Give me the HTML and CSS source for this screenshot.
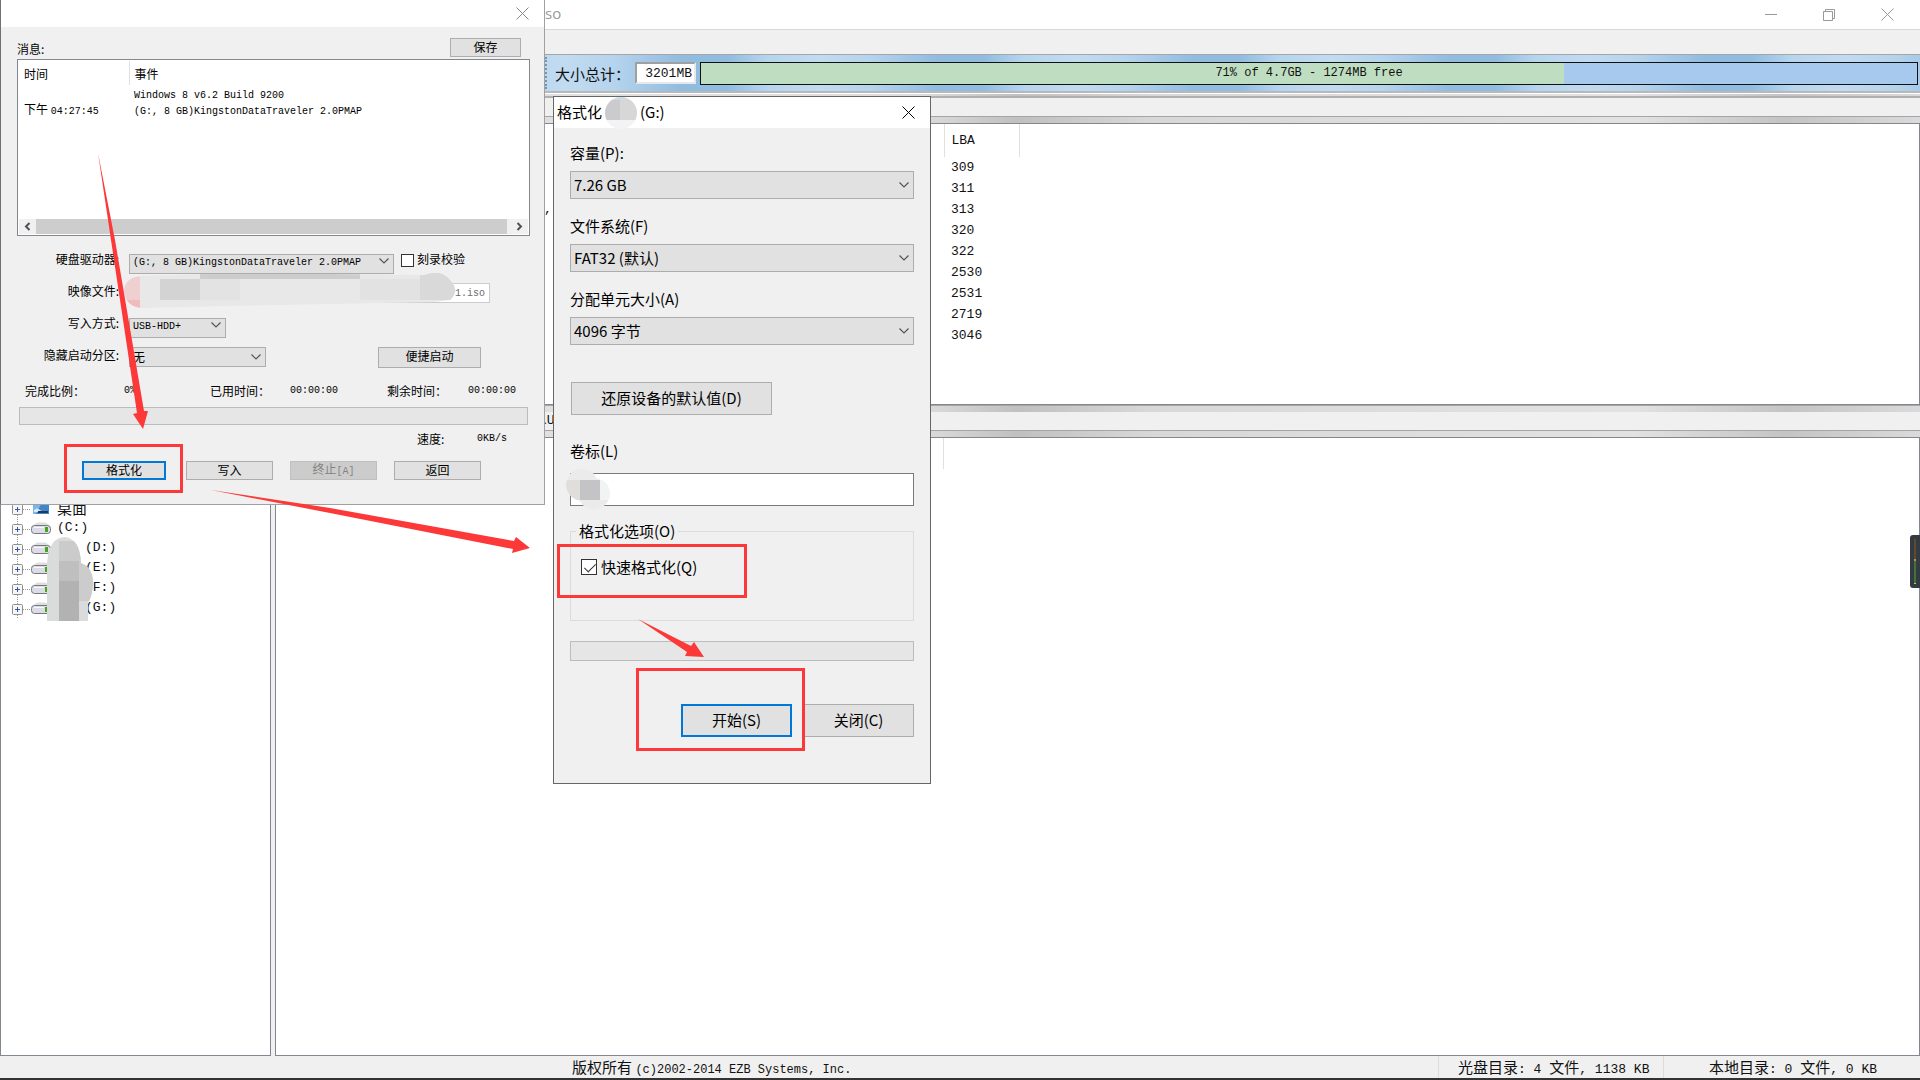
FILE: index.html
```html
<!DOCTYPE html>
<html lang="zh-CN">
<head>
    <meta charset="UTF-8">
    <meta name="viewport" content="width=device-width, initial-scale=1.0">
    <title>UltraISO</title>
    <link rel="stylesheet" href="styles.css">
</head>
<body>
    <svg class="defs" width="0" height="0">
        <symbol id="chevron" viewBox="0 0 10 6"><path d="M0.5 0.5 L5 5 L9.5 0.5" fill="none" stroke="#555" stroke-width="1.2"/></symbol>
        <symbol id="close" viewBox="0 0 13 13"><path d="M0.5 0.5 L12.5 12.5 M12.5 0.5 L0.5 12.5" fill="none" stroke="currentColor"/></symbol>
        <symbol id="plus" viewBox="0 0 19 20">
            <path d="M5.5 0 V20 M11 10.5 H19" stroke="#999" stroke-dasharray="1 1"/>
            <rect x="0.5" y="5.5" width="10" height="10" rx="1" fill="#f6f6f6" stroke="#8f8f8f"/>
            <path d="M3 10.5 H8 M5.5 8 V13" stroke="#3a55a5"/>
        </symbol>
        <symbol id="drive" viewBox="0 0 20 13">
            <path d="M2 4 Q4 0.5 8 0.5 H13 Q17 0.5 18 4 Z" fill="#dedede"/>
            <rect x="0.5" y="3.5" width="19" height="8" rx="3" fill="#dcdce6" stroke="#77777c"/>
            <path d="M3 5.5 H13" stroke="#f8f8ff"/>
            <rect x="14" y="5" width="3" height="5" fill="#46a51d"/>
        </symbol>
        <symbol id="desktop" viewBox="0 0 20 13">
            <rect x="2" width="16" height="12" fill="#3f86cf"/>
            <path d="M2 0 H11 L5 12 H2 Z" fill="#7fb5e6"/>
            <path d="M3 8 Q6 5 9 8 L12 10 H3 Z" fill="#d8ebfa"/>
            <rect x="7" y="9" width="10" height="2" fill="#24384f"/>
        </symbol>
    </svg>

    <!-- main window -->
    <div class="app">
        <header class="titlebar">
            <span class="app-title">so</span>
            <div class="window-buttons">
                <button aria-label="最小化"><svg width="12" height="12"><path d="M0 5.5 H12" stroke="#999"/></svg></button>
                <button aria-label="还原"><svg width="12" height="12"><path d="M0.5 2.5 H9.5 V11.5 H0.5 Z M2.5 2.5 V0.5 H11.5 V9.5 H9.5" fill="none" stroke="#999"/></svg></button>
                <button aria-label="关闭"><svg width="13" height="13"><use href="#close"/></svg></button>
            </div>
        </header>
        <div class="menubar"></div>
        <div class="toolbar">
            <span class="grip"></span>
            <label for="total">大小总计：</label>
            <input id="total" class="total" type="text" value="3201MB" readonly>
            <div class="capacity">
                <div class="capacity-used" style="width: 71%"></div>
                <span>71% of 4.7GB - 1274MB free</span>
            </div>
        </div>

        <div class="splitter thin"></div>
        <div class="pathbar"></div>
        <div class="splitter"></div>
        <div class="split upper">
            <div class="pane"></div>
            <div class="pane">
                <table class="files">
                    <thead>
                        <tr><th class="col-name"></th><th class="col-rest"></th><th class="col-lba">LBA</th></tr>
                    </thead>
                    <tbody>
                        <tr><td></td><td></td><td>309</td></tr>
                        <tr><td></td><td></td><td>311</td></tr>
                        <tr><td></td><td>,</td><td>313</td></tr>
                        <tr><td></td><td></td><td>320</td></tr>
                        <tr><td></td><td></td><td>322</td></tr>
                        <tr><td></td><td></td><td>2530</td></tr>
                        <tr><td></td><td></td><td>2531</td></tr>
                        <tr><td></td><td></td><td>2719</td></tr>
                        <tr><td></td><td></td><td>3046</td></tr>
                    </tbody>
                </table>
            </div>
        </div>
        <div class="splitter"></div>
        <div class="pathbar"><span>\U</span></div>
        <div class="splitter"></div>
        <div class="split lower">
            <div class="pane">
                <ul class="tree">
                    <li><svg class="plus"><use href="#plus"/></svg><svg class="icon"><use href="#desktop"/></svg>桌面</li>
                    <li><svg class="plus"><use href="#plus"/></svg><svg class="icon"><use href="#drive"/></svg><span class="latin">(C:)</span></li>
                    <li><svg class="plus"><use href="#plus"/></svg><svg class="icon"><use href="#drive"/></svg><span class="latin volume">(D:)</span></li>
                    <li><svg class="plus"><use href="#plus"/></svg><svg class="icon"><use href="#drive"/></svg><span class="latin volume">(E:)</span></li>
                    <li><svg class="plus"><use href="#plus"/></svg><svg class="icon"><use href="#drive"/></svg><span class="latin volume">(F:)</span></li>
                    <li><svg class="plus"><use href="#plus"/></svg><svg class="icon"><use href="#drive"/></svg><span class="latin volume">(G:)</span></li>
                </ul>
                <svg class="smudge smudge-tree" width="46" height="84">
                    <clipPath id="clip-tree"><path d="M0 84 V26 Q2 0 18 0 Q33 2 34 26 Q45 30 46 44 Q46 58 41 66 V84 Z"/></clipPath>
                    <g clip-path="url(#clip-tree)">
                        <rect width="46" height="84" fill="#dadcdb"/>
                        <rect x="12" y="4" width="34" height="20" fill="#cbcbcb"/>
                        <rect x="12" y="24" width="20" height="20" fill="#bfbfbf"/>
                        <rect x="32" y="24" width="14" height="40" fill="#cccccc"/>
                        <rect x="12" y="44" width="20" height="40" fill="#b2b2b2"/>
                    </g>
                </svg>
            </div>
            <div class="pane"><div class="empty-header"></div></div>
        </div>

        <footer class="statusbar">
            <div class="copyright">版权所有 <span class="latin-s">(c)2002-2014 EZB Systems, Inc.</span></div>
            <div class="status-cell">光盘目录<span class="latin">: 4 </span>文件<span class="latin">, 1138 KB</span></div>
            <div class="status-cell last">本地目录<span class="latin">: 0 </span>文件<span class="latin">, 0 KB</span></div>
        </footer>
    </div>

    <!-- write disk image dialog -->
    <section class="dialog write-dialog">
        <div class="dialog-title">
            <button class="close" aria-label="关闭"><svg width="13" height="13"><use href="#close"/></svg></button>
        </div>
        <div class="write-body">
            <div class="message-head">
                <span>消息:</span>
                <button class="btn save">保存</button>
            </div>
            <div class="log">
                <table>
                    <thead><tr><th class="col-time">时间</th><th>事件</th></tr></thead>
                    <tbody>
                        <tr><td></td><td><span class="mono">Windows 8 v6.2 Build 9200</span></td></tr>
                        <tr><td>下午 <span class="mono">04:27:45</span></td><td><span class="mono">(G:, 8 GB)KingstonDataTraveler 2.0PMAP</span></td></tr>
                    </tbody>
                </table>
                <div class="scrollbar">
                    <svg width="17" height="15"><path d="M10.5 4 L7 7.5 L10.5 11" fill="none" stroke="#505050" stroke-width="2"/></svg>
                    <div class="thumb"></div>
                    <svg width="21" height="15"><path d="M10.5 4 L14 7.5 L10.5 11" fill="none" stroke="#505050" stroke-width="2"/></svg>
                </div>
            </div>

            <div class="fields">
                <div class="field">
                    <label for="drive-select">硬盘驱动器:</label>
                    <div class="select w-drive">
                        <select id="drive-select" class="mono"><option>(G:, 8 GB)KingstonDataTraveler 2.0PMAP</option></select>
                        <svg><use href="#chevron"/></svg>
                    </div>
                    <input id="verify" class="check" type="checkbox"><label for="verify" class="check-label">刻录校验</label>
                </div>
                <div class="field image-field">
                    <label for="image-file">映像文件:</label>
                    <input id="image-file" class="image-file mono" type="text" value="1.iso" readonly>
                    <svg class="smudge smudge-image" width="332" height="36">
                        <clipPath id="clip-image"><path d="M18 35 Q2 34 0 18 Q1 4 18 3 L80 1 H200 L300 2 Q318 -4 326 7 Q336 18 326 27 L310 29 L100 33 Z"/></clipPath>
                        <g clip-path="url(#clip-image)">
                            <rect width="332" height="38" fill="#e8e8e8"/>
                            <rect width="16" height="27" fill="#efcfcf"/>
                            <rect y="27" width="16" height="11" fill="#f1babb"/>
                            <rect x="36" y="6" width="40" height="21" fill="#d3d3d3"/>
                            <rect x="76" y="0" width="160" height="6" fill="#cdcdcd"/>
                            <rect x="76" y="6" width="40" height="21" fill="#e3e3e3"/>
                            <rect x="236" y="6" width="60" height="21" fill="#e2e2e2"/>
                            <rect x="296" y="0" width="36" height="27" fill="#d9d9d9"/>
                        </g>
                    </svg>
                </div>
                <div class="field">
                    <label for="method">写入方式:</label>
                    <div class="select w-method">
                        <select id="method" class="mono"><option>USB-HDD+</option></select>
                        <svg><use href="#chevron"/></svg>
                    </div>
                </div>
                <div class="field">
                    <label for="hidden-part">隐藏启动分区:</label>
                    <div class="select w-hidden">
                        <select id="hidden-part"><option>无</option></select>
                        <svg><use href="#chevron"/></svg>
                    </div>
                    <button class="btn quick">便捷启动</button>
                </div>
            </div>

            <div class="stats">
                <span>完成比例：</span><span class="mono">0%</span>
                <span>已用时间：</span><span class="mono">00:00:00</span>
                <span>剩余时间：</span><span class="mono">00:00:00</span>
            </div>
            <div class="progress"></div>
            <div class="speed"><span>速度:</span><span class="mono">0KB/s</span></div>
            <div class="actions">
                <button class="btn primary">格式化</button>
                <button class="btn">写入</button>
                <button class="btn" disabled>终止<span class="mono">[A]</span></button>
                <button class="btn">返回</button>
            </div>
        </div>
    </section>

    <!-- format dialog -->
    <section class="dialog format-dialog">
        <div class="dialog-title">
            <span>格式化</span>
            <svg width="32" height="32">
                <clipPath id="clip-title"><circle cx="16" cy="16" r="16"/></clipPath>
                <g clip-path="url(#clip-title)">
                    <rect width="32" height="32" fill="#f3f3f4"/>
                    <rect width="32" height="4" fill="#cfdce6"/>
                    <rect y="3" width="15" height="20" fill="#cbcbcd"/>
                    <rect x="15" y="3" width="17" height="20" fill="#d7d7d8"/>
                </g>
            </svg>
            <span>(G:)</span>
            <button class="close" aria-label="关闭"><svg width="13" height="13"><use href="#close"/></svg></button>
        </div>
        <div class="format-body">
            <label for="capacity">容量(P):</label>
            <div class="select">
                <select id="capacity"><option>7.26 GB</option></select>
                <svg><use href="#chevron"/></svg>
            </div>
            <label for="filesystem">文件系统(F)</label>
            <div class="select">
                <select id="filesystem"><option>FAT32 (默认)</option></select>
                <svg><use href="#chevron"/></svg>
            </div>
            <label for="unit">分配单元大小(A)</label>
            <div class="select">
                <select id="unit"><option>4096 字节</option></select>
                <svg><use href="#chevron"/></svg>
            </div>
            <button class="btn restore">还原设备的默认值(D)</button>
            <label for="volume">卷标(L)</label>
            <div class="volume-box">
                <input id="volume" type="text">
                <svg class="smudge smudge-volume" width="44" height="41">
                    <clipPath id="clip-volume"><path d="M0 16 Q2 0 16 0 Q28 1 30 9 Q43 12 44 25 Q42 39 28 41 Q18 40 14 32 Q1 28 0 16 Z"/></clipPath>
                    <g clip-path="url(#clip-volume)">
                        <rect width="44" height="41" fill="#ebebec"/>
                        <rect y="11" width="14" height="20" fill="#dfdedb"/>
                        <rect x="14" y="11" width="20" height="20" fill="#c4c4c6"/>
                        <rect x="34" y="11" width="10" height="20" fill="#f2f4f4"/>
                    </g>
                </svg>
            </div>
            <fieldset>
                <legend>格式化选项(O)</legend>
                <input id="quick-format" class="check" type="checkbox" checked><label for="quick-format">快速格式化(Q)</label>
            </fieldset>
            <div class="progress"></div>
            <div class="actions">
                <button class="btn primary">开始(S)</button>
                <button class="btn">关闭(C)</button>
            </div>
        </div>
    </section>

    <!-- side meter -->
    <div class="meter"><i class="meter-up"></i><i class="meter-down"></i></div>

    <!-- red marks for the steps -->
    <svg class="marks" width="960" height="800">
        <g fill="none" stroke="#fc3838" stroke-width="3">
            <rect x="65.5" y="445.5" width="116" height="46"/>
            <rect x="558.5" y="545.5" width="187" height="51"/>
            <rect x="637.5" y="669.5" width="166" height="80"/>
        </g>
        <g fill="#fc3838">
            <path d="M98 153 L115 240 L144 411 L148 411 L143 429 L133 414 L137 413 L111 240 Z"/>
            <path d="M211 490 L330 508 L514 541 L516 537 L530 548 L512 553 L513 549 L330 513 Z"/>
            <path d="M638 619 L691 646 L694 642 L704 657 L685 656 L687 652 Z"/>
        </g>
    </svg>
</body>
</html>
```
FILE: styles.css
```css
* {
    box-sizing: border-box;
}

body {
    margin: 0;
    height: 100vh;
    overflow: hidden;
    position: relative;
    font-family: "Noto Sans CJK SC", sans-serif;
    color: #111;
    background: #fff;
}

button, input, select {
    font: inherit;
    color: inherit;
    margin: 0;
    padding: 0;
}

.defs {
    position: absolute;
}

.mono, .latin, .latin-s {
    font-family: "Liberation Mono", "Noto Sans CJK SC", monospace;
}

.mono {
    font-size: 10px;
}

.latin {
    font-size: 13px;
}

.latin-s {
    font-size: 12px;
}

/* main window */
.app {
    height: 100vh;
    display: flex;
    flex-direction: column;
    background: #f0f0f0;
    border-bottom: 2px solid #333;
    font-size: 15px;
}

.titlebar {
    height: 30px;
    display: flex;
    justify-content: space-between;
    align-items: center;
    background: #fff;
    border-bottom: 1px solid #d8d8d8;
}

.app-title {
    padding-left: 545px;
    font-family: "Open Sans", sans-serif;
    line-height: 27px;
    height: 29px;
    color: #999;
}

.window-buttons {
    display: flex;
}

.window-buttons button {
    width: 58px;
    height: 28px;
    border: none;
    background: none;
    color: #999;
    display: flex;
    align-items: center;
    justify-content: center;
}

.window-buttons button:last-child {
    margin-right: 4px;
}

.menubar {
    height: 24px;
}

.toolbar {
    height: 39px;
    display: flex;
    align-items: center;
    padding: 0 2px 0 545px;
    border-top: 1px solid #a9a5a5;
    border-bottom: 2px solid #b8b8b8;
    background: repeating-linear-gradient(to right, #b6d5ee 0, #c1dbf1 52px, #b6d4ed 100px, #90bce0 170px, #90bce0 215px, #b6d5ee 256px);
}

.grip {
    width: 2px;
    height: 32px;
    border-left: 2px dotted #7795b0;
}

.toolbar label {
    width: 80px;
    margin-left: 8px;
}

.total {
    width: 61px;
    height: 22px;
    padding-right: 2px;
    border: 2px solid #a0a0a0;
    border-right-color: #e8e8e8;
    border-bottom-color: #e8e8e8;
    background: #fff;
    text-align: right;
    font-family: "Liberation Mono", monospace;
    font-size: 13px;
}

.capacity {
    flex: 1;
    height: 23px;
    margin-left: 4px;
    display: grid;
    align-items: center;
    border: 1px solid #111;
    background: #a7c9ee;
    font-family: "Liberation Mono", monospace;
    font-size: 12px;
}

.capacity-used {
    grid-area: 1 / 1;
    height: 100%;
    background: #bfddc0;
}

.capacity span {
    grid-area: 1 / 1;
    text-align: center;
}

.splitter {
    height: 7px;
    border-top: 1px solid #a5a5a5;
    background: linear-gradient(to right, #d8d8d8 0, #e0e0e0 30%, #dcdcdc 48%, #c0c0c0 53%, #d8d8d8 60%, #e2e2e2 85%, #c4c4c4 93%, #dadada 100%);
}

.splitter.thin {
    height: 5px;
    border-top-color: #fff;
    border-bottom: 2px solid #b0b0b0;
}

.pathbar {
    height: 18px;
    padding-left: 539px;
    line-height: 18px;
    font-family: "Liberation Mono", monospace;
    font-size: 13px;
}

.split {
    display: grid;
    grid-template-columns: 271px 1fr;
    gap: 4px;
}

.upper {
    height: 282px;
}

.lower {
    flex: 1;
    min-height: 0;
}

.pane {
    position: relative;
    background: #fff;
    border: 1px solid #828790;
    overflow: hidden;
}

.files {
    border-collapse: collapse;
    table-layout: fixed;
    width: 743px;
    font-family: "Liberation Mono", monospace;
    font-size: 13px;
    line-height: 21px;
}

.files th, .files td {
    padding: 0;
    height: 21px;
    text-align: left;
    font-weight: normal;
}

.files th {
    height: 33px;
    border-right: 1px solid #e0e0e0;
}

.files th:last-child, .files td:last-child {
    padding-left: 7px;
}

.col-name {
    width: 268px;
}

.col-rest {
    width: 400px;
}

.col-lba {
    width: 75px;
}

.empty-header {
    width: 668px;
    height: 31px;
    border-right: 1px solid #e0e0e0;
}

.tree {
    list-style: none;
    margin: 0;
    padding: 61px 0 0 11px;
    line-height: 18px;
}

.tree li {
    display: flex;
    height: 20px;
    white-space: pre;
}

.plus {
    width: 19px;
    height: 20px;
}

.icon {
    width: 20px;
    height: 13px;
    margin: 3px 6px 0 0;
}

.volume {
    margin-left: 28px;
}

.smudge {
    position: absolute;
}

.smudge-tree {
    left: 46px;
    top: 99px;
}

.statusbar {
    height: 22px;
    display: flex;
    line-height: 22px;
    white-space: pre;
}

.copyright {
    flex: 1;
    padding-left: 572px;
}

.status-cell {
    width: 225px;
    padding-left: 19px;
    border-left: 1px solid #dcdcdc;
}

.status-cell.last {
    width: 257px;
    padding-left: 45px;
}

/* dialogs */
.dialog {
    position: absolute;
    background: #f0f0f0;
    color: #000;
}

.dialog-title {
    display: flex;
    align-items: center;
    background: #fff;
}

.close {
    display: flex;
    margin-left: auto;
    border: none;
    background: none;
}

.btn {
    padding-bottom: 2px;
    border: 1px solid #adadad;
    background: #e1e1e1;
    line-height: 1;
    white-space: nowrap;
}

.btn.primary {
    border: 2px solid #0078d7;
}

.btn:disabled {
    border-color: #bfbfbf;
    background: #ccc;
    color: #838383;
}

.select {
    position: relative;
}

.select select {
    appearance: none;
    width: 100%;
    height: 100%;
    padding: 0 0 2px 3px;
    border: 1px solid #adadad;
    border-radius: 0;
    background: #e1e1e1;
}

.select svg {
    position: absolute;
    right: 5px;
    top: calc(50% - 3px);
    width: 10px;
    height: 6px;
    pointer-events: none;
}

.check {
    appearance: none;
    border: 1px solid #333;
    background: #fff;
}

.progress {
    border: 1px solid #bcbcbc;
    background: #e6e6e6;
}

/* write dialog */
.write-dialog {
    left: 0;
    top: 0;
    width: 545px;
    border: 1px solid #a0a0a0;
    border-top: none;
    border-left-color: #707078;
    font-size: 12px;
}

.write-dialog .dialog-title {
    height: 27px;
    padding-right: 15px;
    color: #888;
}

.write-body {
    padding: 11px 14px 24px 16px;
}

.message-head {
    display: flex;
    justify-content: space-between;
    height: 19px;
    line-height: 22px;
}

.save {
    width: 71px;
    margin-right: 9px;
}

.log {
    height: 177px;
    margin-top: 2px;
    padding: 1px;
    display: flex;
    flex-direction: column;
    justify-content: space-between;
    border: 1px solid #828790;
    background: #fff;
}

.log table {
    width: 100%;
    border-collapse: collapse;
}

.log th, .log td {
    padding: 0 0 0 5px;
    height: 16px;
    line-height: 15px;
    text-align: left;
    font-weight: normal;
}

.log td .mono {
    line-height: 1;
}

.log th {
    height: 24px;
}

.log .col-time {
    width: 110px;
    border-right: 1px solid #e0e0e0;
}

.scrollbar {
    display: flex;
    height: 15px;
    background: #f0f0f0;
}

.thumb {
    flex: 1;
    background: #cdcdcd;
}

.fields {
    display: flex;
    flex-direction: column;
    gap: 12px;
    margin-top: 15px;
}

.field {
    position: relative;
    display: flex;
    align-items: center;
    height: 20px;
}

.field label {
    height: 20px;
    line-height: 16px;
}

.field label:first-child {
    width: 102px;
    margin-right: 10px;
    text-align: right;
}

.field .select {
    height: 20px;
}

.w-drive {
    width: 265px;
}

.w-method {
    width: 97px;
}

.w-hidden {
    width: 137px;
}

.field .check {
    width: 13px;
    height: 13px;
    margin: 0 3px 2px 7px;
}

.image-file {
    width: 361px;
    height: 20px;
    padding-right: 4px;
    border: 1px solid #ccc;
    background: #fff;
    color: #6d6d6d;
    text-align: right;
}

.smudge-image {
    left: 107px;
    top: -10px;
}

.quick {
    width: 103px;
    height: 21px;
    margin: 0 49px 0 auto;
}

.stats {
    display: grid;
    grid-template-columns: 99px 86px 80px 97px 81px 1fr;
    align-items: center;
    height: 18px;
    margin-top: 14px;
    padding-left: 8px;
}

.write-body .progress {
    height: 18px;
    margin: 8px 2px 0;
}

.speed {
    display: flex;
    align-items: center;
    height: 16px;
    margin-top: 5px;
    padding-left: 400px;
}

.speed span:first-child {
    width: 60px;
}

.write-body .actions {
    display: grid;
    grid-template-columns: repeat(4, 87px);
    gap: 17px;
    height: 19px;
    margin-top: 15px;
    padding-left: 65px;
}

.write-body .primary {
    width: 84px;
}

/* format dialog */
.format-dialog {
    left: 553px;
    top: 96px;
    width: 378px;
    border: 1px solid #666;
    font-size: 15px;
}

.format-dialog .dialog-title {
    height: 31px;
    padding: 0 15px 0 3px;
    gap: 3px;
}

.format-dialog .dialog-title span {
    height: 26px;
    line-height: 24px;
}

.format-body {
    display: flex;
    flex-direction: column;
    padding: 15px 16px 46px;
}

.format-body > label {
    height: 22px;
    line-height: 20px;
    margin-bottom: 6px;
}

.format-body .select {
    height: 28px;
    margin-bottom: 17px;
}

.restore {
    align-self: flex-start;
    width: 201px;
    height: 33px;
    margin: 20px 0 26px 1px;
}

.volume-box {
    position: relative;
    height: 33px;
    margin-top: 4px;
}

.volume-box input {
    width: 100%;
    height: 100%;
    padding: 0 45px;
    border: 1px solid #7a7a7a;
    background: #fff;
}

.smudge-volume {
    left: -4px;
    top: -4px;
}

fieldset {
    display: flex;
    align-items: flex-start;
    height: 101px;
    margin: 14px 0 20px;
    padding: 15px 10px;
    border: 1px solid #dcdcdc;
}

legend {
    height: 22px;
    line-height: 22px;
    margin-left: -5px;
    padding: 0 3px;
}

fieldset label {
    line-height: 20px;
    margin-left: 4px;
}

fieldset .check {
    position: relative;
    width: 16px;
    height: 16px;
    margin-top: 2px;
}

/* tick */
fieldset .check:checked::after {
    content: "";
    position: absolute;
    left: 5px;
    top: 1px;
    width: 5px;
    height: 10px;
    border: solid #333;
    border-width: 0 1px 1px 0;
    transform: rotate(45deg);
}

.format-body .progress {
    height: 20px;
}

.format-body .actions {
    display: flex;
    justify-content: flex-end;
    gap: 11px;
    margin-top: 43px;
}

.format-body .actions .btn {
    width: 111px;
    height: 33px;
}

/* meter on the right edge */
.meter {
    position: absolute;
    right: 0;
    top: 535px;
    width: 10px;
    height: 53px;
    padding: 4px;
    background: #343a42;
    border-radius: 3px 0 0 3px;
}

.meter i {
    display: block;
    width: 2px;
}

.meter-up {
    height: 22px;
    background: #5d4a30;
    border-bottom: 2px solid #d08a20;
}

.meter-down {
    height: 23px;
    background: #44703a;
    border-bottom: 1px solid #a4e04a;
}

.marks {
    position: absolute;
    left: 0;
    top: 0;
    pointer-events: none;
}
```
